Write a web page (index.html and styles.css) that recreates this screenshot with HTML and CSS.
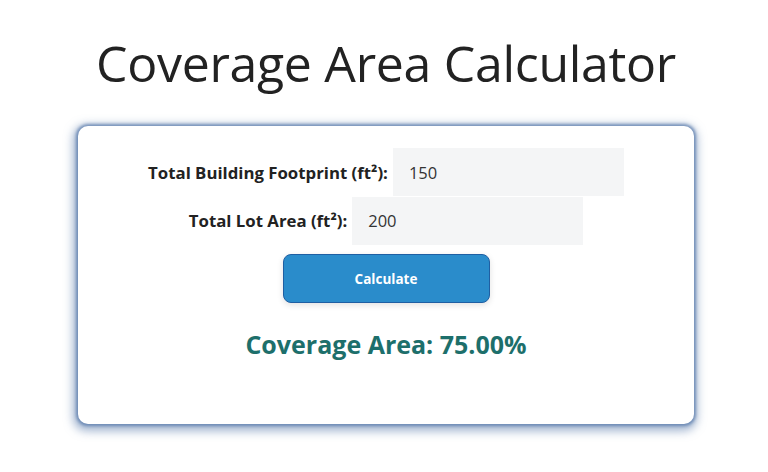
FILE: index.html
```html
<!DOCTYPE html>
<html lang="en">
<head>
<meta charset="utf-8">
<title>Coverage Area Calculator</title>
<link rel="stylesheet" href="styles.css">
</head>
<body>
<h1 class="title">Coverage Area Calculator</h1>
<div class="card">
  <div class="row">
    <label class="label" for="fp">Total Building Footprint (ft²):</label>
    <input class="field" id="fp" type="text" value="150">
  </div>
  <div class="row">
    <label class="label" for="lot">Total Lot Area (ft²):</label>
    <input class="field" id="lot" type="text" value="200">
  </div>
  <button class="btn" type="button">Calculate</button>
  <div class="result">Coverage Area: 75.00%</div>
</div>
</body>
</html>
```
FILE: styles.css
```css
html, body {
  margin: 0;
  padding: 0;
  background: #ffffff;
}
body {
  font-family: "Open Sans", "Noto Sans", sans-serif;
  color: #222;
  display: flex;
  flex-direction: column;
  align-items: center;
  padding: 0 0 40px 4px;
}
.title {
  margin: 27px 0 0;
  font-weight: 400;
  font-size: 50px;
  line-height: 72px;
  color: #222;
  letter-spacing: -0.3px;
}
.card {
  margin-top: 27px;
  width: 616px;
  height: 298px;
  box-sizing: border-box;
  background: #fff;
  border-radius: 10px;
  box-shadow: 0 0 3px 2px rgba(85, 120, 170, 0.7), -1px 3px 10px 4px rgba(85, 120, 170, 0.55);
  display: flex;
  flex-direction: column;
  align-items: center;
  padding-top: 22px;
}
.row {
  display: flex;
  align-items: center;
  gap: 5px;
  height: 48.5px;
}
.label {
  font-weight: 700;
  font-size: 16.8px;
  color: #222;
}
.field {
  width: 231px;
  height: 48px;
  box-sizing: border-box;
  border: none;
  background: #f4f5f6;
  padding: 0 16px;
  font-family: inherit;
  font-size: 16.5px;
  color: #333;
  outline: none;
}
.btn {
  margin-top: 9px;
  width: 207px;
  height: 49px;
  background: #2a8ccb;
  border: 1px solid #1f5fa3;
  border-radius: 8px;
  color: #fff;
  font-family: inherit;
  font-weight: 700;
  font-size: 13.5px;
  box-shadow: 0 2px 6px rgba(0, 0, 0, 0.12);
}
.result {
  margin-top: 24px;
  font-weight: 700;
  font-size: 25px;
  color: #1d6f6b;
}
```
